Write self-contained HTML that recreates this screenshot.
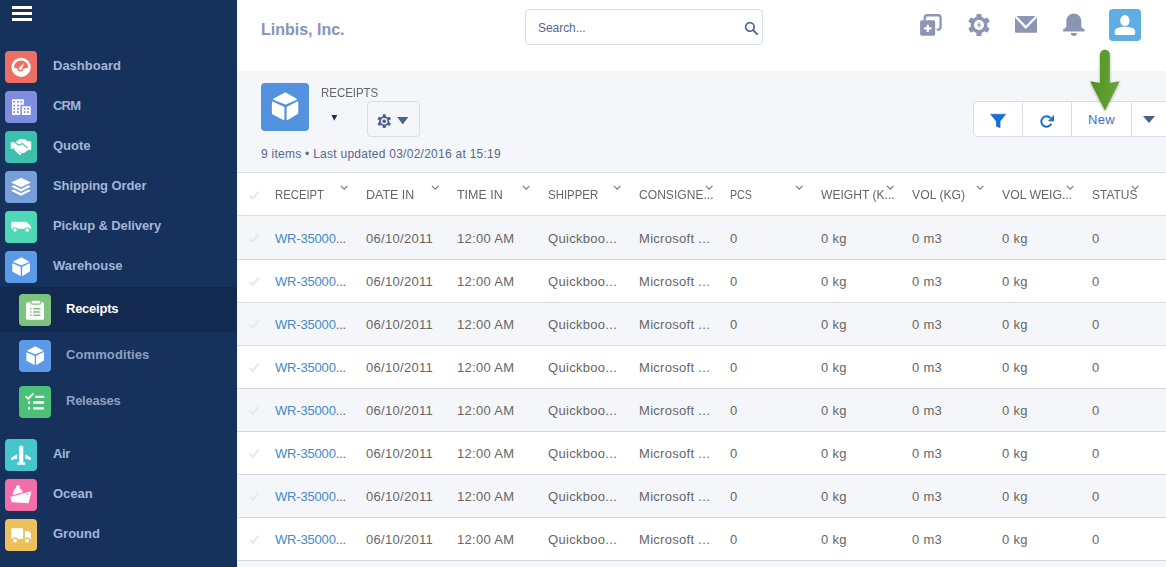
<!DOCTYPE html>
<html lang="en">
<head>
<meta charset="utf-8">
<title>Linbis, Inc. - Receipts</title>
<style>
*{box-sizing:border-box;margin:0;padding:0}
html,body{width:1166px;height:567px;overflow:hidden;background:#fff}
body{font-family:"Liberation Sans","DejaVu Sans",sans-serif;font-size:13px;color:#666;position:relative}
.abs{position:absolute}
/* sidebar */
#side{position:absolute;left:0;top:0;width:237px;height:567px;background:#16325c}
.burger{position:absolute;left:12px;top:6px;width:19.600px;height:15px}
.burger i{display:block;height:3px;background:#fff;margin-bottom:3px}
.nav{position:absolute;left:0;width:237px;height:40px}
.nav .ic{position:absolute;left:5px;top:0;width:32px;height:32px;border-radius:4px}
.nav .lb{position:absolute;left:53px;top:-1px;line-height:32px;font-size:13px;font-weight:bold;color:#a3b5d8;letter-spacing:0;white-space:nowrap}
.sub{position:absolute;left:0;width:237px;height:45px}
.sub .ic{position:absolute;left:19px;top:7px;width:32px;height:32px;border-radius:4px}
.sub .lb{position:absolute;left:66px;top:6px;line-height:32px;font-size:13px;font-weight:bold;color:#a3b5d8;letter-spacing:.1px;white-space:nowrap}
.sub .lb{color:#8f9fbe}
.sub.act{background:#122a50}
.sub.act .lb{color:#fff}
.ic svg{position:absolute;left:0;top:0;width:32px;height:32px}
/* top bar */
#brand{position:absolute;left:261px;top:20px;font-size:16px;font-weight:bold;color:#8694b3;line-height:20px;white-space:nowrap}
#search{position:absolute;left:525px;top:9px;width:238px;height:36px;border:1px solid #d8dde6;border-radius:4px;background:#fff}
#search span{position:absolute;left:12px;top:1px;line-height:34px;font-size:12px;color:#54698d;letter-spacing:-.05px}
#search svg{position:absolute;left:217.500px;top:10.500px;width:14.500px;height:14.500px}
.ti{position:absolute}
#avatar{position:absolute;left:1109px;top:9px;width:32px;height:32px;border-radius:4px;background:#5fade3}
/* page header */
#ph{position:absolute;left:237px;top:71px;width:929px;height:102px;background:#f4f6f9}
#phicon{position:absolute;left:261px;top:83px;width:48px;height:48px;border-radius:4px;background:#5392de}
#title{position:absolute;left:321px;top:85px;line-height:16px;font-size:13px;color:#666;white-space:nowrap;transform-origin:0 50%;transform:scaleX(.88)}
#gearbtn{position:absolute;left:367px;top:101px;width:53px;height:36px;border:1px solid #d8dde6;border-radius:4px;background:#f4f6f9}
#info{position:absolute;left:261px;top:146px;line-height:16px;font-size:12px;color:#54698d;letter-spacing:.26px;white-space:nowrap}
#bg{position:absolute;left:973px;top:101px;width:200px;height:36px;border:1px solid #d8dde6;border-radius:4px;background:#fff}
#bg .dv{position:absolute;top:0;width:1px;height:34px;background:#d8dde6}
#new{position:absolute;left:1088px;top:112px;line-height:16px;font-size:13px;color:#3d6fc6;letter-spacing:.3px}
/* table */
#thead{position:absolute;left:237px;top:172px;width:929px;height:44px;background:#fff;border-top:1px solid #d8dde6;border-bottom:1px solid #d8dde6}
.row{position:absolute;left:237px;width:929px;height:43px;border-bottom:1px solid #d6d9df;background:#fff}
.row.alt{background:#f4f6f9}
.c{position:absolute;top:0;line-height:43px;font-size:13px;color:#666;white-space:nowrap;letter-spacing:.3px}
.lk{color:#4489c8}
.c0{letter-spacing:-.18px}
.row.r0{height:44px}
.row.r0 .c{top:1px}
.h{position:absolute;top:0;line-height:43px;font-size:13px;color:#666;white-space:nowrap;transform-origin:0 50%}
.chev{position:absolute;top:12.300px;width:8.400px;height:5.600px}
.ck{position:absolute;left:11px;width:12px;height:9.800px}

</style>
</head>
<body>
<div id="side">
<div class="burger"><i></i><i></i><i></i></div>
<div class="nav" style="top:51px"><div class="ic" style="background:#ef6e64"><svg viewBox="0 0 32 32"><circle cx="16.100" cy="16.300" r="9.600" fill="#fff"/><path d="M9 16.500A7.100 7.100 0 0 1 23.200 16.500Q19.500 17.700 16.100 17.700Q12.500 17.700 9 16.500z" fill="#ef6e64"/><circle cx="15.500" cy="17.400" r="3" fill="#ef6e64"/><circle cx="15.500" cy="17.400" r="1.600" fill="#fff"/><path d="M14.300 16.600L19 12.300 16.800 18.300z" fill="#fff"/></svg></div><div class="lb">Dashboard</div></div>
<div class="nav" style="top:91px"><div class="ic" style="background:#7f8de1"><svg viewBox="0 0 32 32"><path d="M7 8.300h11.900v5.500h-3.500v10.200H7z" fill="#fff"/><rect x="16.900" y="15.300" width="8.800" height="8.700" fill="#fff"/><g fill="#7f8de1"><rect x="8.3" y="9.9" width="1.800" height="1.800"/><rect x="12.1" y="9.9" width="1.800" height="1.800"/><rect x="15.5" y="9.9" width="1.800" height="1.800"/><rect x="8.3" y="13.6" width="1.800" height="1.800"/><rect x="12.1" y="13.6" width="1.800" height="1.800"/><rect x="8.3" y="16.9" width="1.800" height="1.800"/><rect x="12.1" y="16.9" width="1.800" height="1.800"/><rect x="8.3" y="20.1" width="1.800" height="1.800"/><rect x="12.1" y="20.1" width="1.800" height="1.800"/><rect x="18.8" y="16.9" width="1.800" height="1.800"/><rect x="22.0" y="16.9" width="1.800" height="1.800"/><rect x="18.8" y="20.1" width="1.800" height="1.800"/><rect x="22.0" y="20.1" width="1.800" height="1.800"/></g></svg></div><div class="lb" style="letter-spacing:-.8px">CRM</div></div>
<div class="nav" style="top:131px"><div class="ic" style="background:#3dbfad"><svg viewBox="0 0 32 32"><path d="M6 11.300L10.300 11.500 12.200 10.300 14.500 8.500H20L22.300 10.300 25.900 10.800V18.800H22.700L21 20.600 18.100 21.900 16 21.500 10 16.900 6 17.700z" fill="#fff" stroke="#fff" stroke-width=".6" stroke-linejoin="round"/><path d="M10.300 18.500L15.100 23" stroke="#fff" stroke-width="2.300" stroke-linecap="round"/><path d="M10 11.200L13.600 14.100 16.600 13.200M16.300 11.600L22.400 16.900" stroke="#3dbfad" stroke-width="1.200" fill="none"/></svg></div><div class="lb">Quote</div></div>
<div class="nav" style="top:171px"><div class="ic" style="background:#769ed9"><svg viewBox="0 0 32 32"><path d="M16 6.700l9.900 4.800-9.900 4.800-9.900-4.800z" fill="#fff"/><path d="M6.100 15.500l2.400-1.200 7.500 3.700 7.500-3.700 2.400 1.200-9.900 4.900z" fill="#fff"/><path d="M6.100 19.800l2.400-1.200 7.500 3.700 7.500-3.700 2.400 1.200-9.900 4.900z" fill="#fff"/></svg></div><div class="lb" style="letter-spacing:-.08px">Shipping Order</div></div>
<div class="nav" style="top:211px"><div class="ic" style="background:#4ed8b6"><svg viewBox="0 0 32 32"><path d="M6.200 12.300c0-.9.600-1.500 1.500-1.500h13l3.200 2.200 2 2.200v2.600H6.200z" fill="#fff"/><circle cx="10" cy="19" r="2.300" fill="#fff" stroke="#4ed8b6" stroke-width="1.100"/><circle cx="22.200" cy="19" r="2.300" fill="#fff" stroke="#4ed8b6" stroke-width="1.100"/></svg></div><div class="lb" style="letter-spacing:-.1px">Pickup &amp; Delivery</div></div>
<div class="nav" style="top:251px"><div class="ic" style="background:#5a9ae6"><svg viewBox="0 0 32 32"><g transform="translate(.1 0) scale(.6667)" fill="#fff" stroke="#fff" stroke-width="1.600" stroke-linejoin="round"><path d="M24.300 10.300L35 16.200 24.500 20.800 13.200 16.200z"/><path d="M11.700 19.400L22.600 24.400V36.300L11.700 30.600z"/><path d="M26.400 24.400L36.500 19.200V30L26.400 36.400z"/></g></svg></div><div class="lb">Warehouse</div></div>
<div class="nav" style="top:439px"><div class="ic" style="background:#46c5cd"><svg viewBox="0 0 32 32"><path d="M14.100 8.600a2.100 2.100 0 0 1 4.200 0v15h2v2.100h-8.200v-2.100h2z" fill="#fff"/><path d="M12.200 15.200l-6 3.600v2.400l6-1.600z M20.300 15.200l5.700 3.600v2.400l-5.700-1.600z" fill="#fff"/></svg></div><div class="lb" style="letter-spacing:-.4px">Air</div></div>
<div class="nav" style="top:479px"><div class="ic" style="background:#f16eab"><svg viewBox="0 0 32 32"><path d="M8 15.500L9.800 10.200 11.400 9.400 11.800 6.800H14.200L14.600 9.400 17 11.700 17.500 13z" fill="#fff" stroke="#fff" stroke-width=".8" stroke-linejoin="round"/><path d="M5.800 18.200L25.900 12.800 23.300 23.800 7 22.800z" fill="#fff" stroke="#fff" stroke-width=".8" stroke-linejoin="round"/><circle cx="22.500" cy="15.200" r=".8" fill="#f16eab"/></svg></div><div class="lb">Ocean</div></div>
<div class="nav" style="top:519px"><div class="ic" style="background:#ebc15c"><svg viewBox="0 0 32 32"><path d="M6.200 9.300h11.900v10.700H6.200z M19.900 12h4l2.100 2.500v5.500h-6.100z" fill="#fff"/><circle cx="10" cy="21.600" r="2.600" fill="#fff" stroke="#ebc15c" stroke-width="1.300"/><circle cx="22.100" cy="21.600" r="2.600" fill="#fff" stroke="#ebc15c" stroke-width="1.300"/></svg></div><div class="lb">Ground</div></div>
<div class="sub act" style="top:287px"><div class="ic" style="background:#7dc37d"><svg viewBox="0 0 32 32"><rect x="7" y="8.200" width="18" height="17.600" rx="1.600" fill="#fff"/><rect x="12" y="6.200" width="10" height="4" rx="1.600" fill="#fff" stroke="#7dc37d" stroke-width="1.200"/><g stroke="#7dc37d" stroke-width="1.400"><path d="M11 14.800h1.500M14.100 14.800h7.300M11 18h1.500M14.100 18h7.300M11 21.200h1.500M14.100 21.200h7.300"/></g></svg></div><div class="lb" style="letter-spacing:-.25px">Receipts</div></div>
<div class="sub" style="top:333px"><div class="ic" style="background:#5a9ae6"><svg viewBox="0 0 32 32"><g transform="translate(.1 0) scale(.6667)" fill="#fff" stroke="#fff" stroke-width="1.600" stroke-linejoin="round"><path d="M24.300 10.300L35 16.200 24.500 20.800 13.200 16.200z"/><path d="M11.700 19.400L22.600 24.400V36.300L11.700 30.600z"/><path d="M26.400 24.400L36.500 19.200V30L26.400 36.400z"/></g></svg></div><div class="lb">Commodities</div></div>
<div class="sub" style="top:379px"><div class="ic" style="background:#4bc076"><svg viewBox="0 0 32 32"><path d="M6.600 10.200l2.700 2.500 5.200-5.300" stroke="#fff" stroke-width="1.900" fill="none"/><path d="M16.100 10.900h9M9 16.500h2.100M14.100 16.500h11M9 22.300h2.100M14.100 22.300h11" stroke="#fff" stroke-width="2.300"/></svg></div><div class="lb" style="letter-spacing:-.25px">Releases</div></div>
</div>
<div id="brand">Linbis, Inc.</div>
<div id="search"><span>Search...</span><svg viewBox="0 0 16 16"><circle cx="6.500" cy="6.500" r="4.700" fill="none" stroke="#54698d" stroke-width="1.900"/><path d="M10 10l4.500 4.500" stroke="#54698d" stroke-width="2.200" stroke-linecap="round"/></svg></div>
<svg class="ti" style="left:919px;top:13px" width="24" height="24" viewBox="0 0 24 24"><path d="M5.750 7.500V4.750a2.500 2.500 0 0 1 2.500-2.500h10.800a2.500 2.500 0 0 1 2.500 2.500v9.300a2.500 2.500 0 0 1-2.500 2.500h-1.300" fill="none" stroke="#8b96b4" stroke-width="2.300"/><rect x="1.100" y="7.300" width="15.100" height="15.400" rx="1.600" fill="#8b96b4"/><path d="M8.800 11.700v7.400M5.100 15.400h7.400" stroke="#fff" stroke-width="2.200"/></svg>
<svg class="ti" style="left:966.800px;top:12.900px" width="24" height="24" viewBox="0 0 24 24"><g fill="#8b96b4"><circle cx="12" cy="12" r="8.400"/><rect x="9.400" y="0.900" width="5.200" height="22.200" rx="1.200"/><rect x="9.400" y="0.900" width="5.200" height="22.200" rx="1.200" transform="rotate(60 12 12)"/><rect x="9.400" y="0.900" width="5.200" height="22.200" rx="1.200" transform="rotate(120 12 12)"/></g><circle cx="12" cy="12" r="5" fill="#fff"/><path d="M13 8.300l-3.200 4.300h2l-.8 3.100 3.200-4.300h-2z" fill="#8b96b4"/></svg>
<svg class="ti" style="left:1014px;top:15px" width="24" height="19" viewBox="0 0 24 19"><rect x="1" y="1" width="22" height="16.800" rx="1" fill="#8b96b4"/><path d="M1.300 1.300l10.500 11 10.900-11" fill="none" stroke="#fff" stroke-width="2.200"/></svg>
<svg class="ti" style="left:1062px;top:13px" width="24" height="24" viewBox="0 0 24 24"><path d="M11.800.600c-4.200 0-7.500 3.300-7.500 7.500v5c0 1.300-.8 2.300-3.300 3.400v1.900h21.600v-1.900c-2.500-1.100-3.300-2.100-3.300-3.400v-5c0-4.200-3.300-7.500-7.500-7.500z" fill="#8b96b4"/><path d="M8.800 20a3 3 0 0 0 6 0z" fill="#8b96b4"/></svg>
<div id="avatar"><svg width="32" height="32" viewBox="0 0 32 32"><ellipse cx="15.900" cy="11.600" rx="4.700" ry="5.500" fill="#fff"/><path d="M5.700 22.500c0-2.500 1.800-3.700 4.500-4l3.300-.7h4.800l3.300.7c2.700.3 4.500 1.500 4.500 4v1.800c0 1-.7 1.600-1.600 1.600H7.300c-.9 0-1.600-.6-1.600-1.600z" fill="#fff"/></svg></div>
<div id="ph"></div>
<div id="phicon"><svg width="48" height="48" viewBox="0 0 48 48"><g fill="#fff" stroke="#fff" stroke-width="1.600" stroke-linejoin="round"><path d="M24.300 10.300L35 16.200 24.500 20.800 13.200 16.200z"/><path d="M11.700 19.400L22.600 24.400V36.300L11.700 30.600z"/><path d="M26.400 24.400L36.500 19.200V30L26.400 36.400z"/></g></svg></div>
<div id="title">RECEIPTS</div>
<svg class="ti" style="left:330.800px;top:114.800px" width="6.600" height="5.800" viewBox="0 0 8 7"><path d="M0.500 0h7L4 7z" fill="#16325c"/></svg>
<div id="gearbtn"><svg class="ti" style="left:8.700px;top:11.600px" width="14.500" height="14.500" viewBox="0 0 24 24"><g fill="#4c6088"><circle cx="12" cy="12" r="8.300"/><rect x="9.500" y="0.500" width="5" height="23" rx="1"/><rect x="9.500" y="0.500" width="5" height="23" rx="1" transform="rotate(60 12 12)"/><rect x="9.500" y="0.500" width="5" height="23" rx="1" transform="rotate(120 12 12)"/></g><circle cx="12" cy="12" r="5.400" fill="#e9effa"/><circle cx="12" cy="12" r="3" fill="#4c6088"/></svg><svg class="ti" style="left:29px;top:15px" width="11.500" height="7.400" viewBox="0 0 12 8"><path d="M0 0h12L6 8z" fill="#4c6088"/></svg></div>
<div id="info">9 items • Last updated 03/02/2016 at 15:19</div>
<div id="bg"><div class="dv" style="left:48px"></div><div class="dv" style="left:97px"></div><div class="dv" style="left:157px"></div>
<svg class="ti" style="left:16px;top:11px" width="17" height="16" viewBox="0 0 17 16"><path d="M.600 1.200H15.700L10.100 8.300V14.700L6.300 13.200V8.300z" fill="#1670d0" stroke="#1670d0" stroke-width=".6" stroke-linejoin="round"/></svg>
<svg class="ti" style="left:66px;top:12px" width="15" height="15" viewBox="0 0 15 15"><path d="M10.500 4.200A5.200 5.200 0 1 0 11.200 9.800" fill="none" stroke="#1670d0" stroke-width="2"/><path d="M14 .800V7.300H7.800z" fill="#1670d0"/></svg>
<svg class="ti" style="left:169px;top:13.500px" width="12" height="7" viewBox="0 0 12 7"><path d="M0 0h12L6 7z" fill="#4c6088"/></svg>
</div>
<div id="new">New</div>
<svg class="ti" style="left:1085px;top:48px;filter:drop-shadow(0 1px 1.500px rgba(0,0,0,.35))" width="40" height="68" viewBox="0 0 40 68"><defs><linearGradient id="ag" x1="0" y1="0" x2="1" y2="0"><stop offset="0" stop-color="#508f22"/><stop offset="1" stop-color="#69a836"/></linearGradient></defs><path d="M15 6.600a4.900 4.900 0 0 1 9.800 0V35L34.500 33.200 20 62.500 5.200 33.200 15 35z" fill="url(#ag)"/></svg>

<div id="thead"><svg class="ck" style="top:16.5px" viewBox="0 0 11 9"><path d="M1.300 5.300l3 2.800 5.600-6.600" stroke="#e7e9ec" stroke-width="2.100" fill="none"/></svg><div class="h" style="left:38px;transform:scaleX(0.87)">RECEIPT</div><svg class="chev" style="left:103.19999999999999px" viewBox="0 0 9 6"><path d="M1 1l3.500 3.500 3.500-3.500" stroke="#777" stroke-width="1.200" fill="none"/></svg><div class="h" style="left:129px;transform:scaleX(0.96)">DATE IN</div><svg class="chev" style="left:194.2px" viewBox="0 0 9 6"><path d="M1 1l3.500 3.500 3.500-3.500" stroke="#777" stroke-width="1.200" fill="none"/></svg><div class="h" style="left:220px;transform:scaleX(0.96)">TIME IN</div><svg class="chev" style="left:285.1px" viewBox="0 0 9 6"><path d="M1 1l3.500 3.500 3.500-3.500" stroke="#777" stroke-width="1.200" fill="none"/></svg><div class="h" style="left:311px;transform:scaleX(0.88)">SHIPPER</div><svg class="chev" style="left:376.20000000000005px" viewBox="0 0 9 6"><path d="M1 1l3.500 3.500 3.500-3.500" stroke="#777" stroke-width="1.200" fill="none"/></svg><div class="h" style="left:402px;transform:scaleX(0.93)">CONSIGNE...</div><svg class="chev" style="left:467.5px" viewBox="0 0 9 6"><path d="M1 1l3.500 3.500 3.500-3.500" stroke="#777" stroke-width="1.200" fill="none"/></svg><div class="h" style="left:493px;transform:scaleX(0.82)">PCS</div><svg class="chev" style="left:558px" viewBox="0 0 9 6"><path d="M1 1l3.500 3.500 3.500-3.500" stroke="#777" stroke-width="1.200" fill="none"/></svg><div class="h" style="left:584px;transform:scaleX(0.93)">WEIGHT (K...</div><svg class="chev" style="left:648.9px" viewBox="0 0 9 6"><path d="M1 1l3.500 3.500 3.500-3.500" stroke="#777" stroke-width="1.200" fill="none"/></svg><div class="h" style="left:675px;transform:scaleX(0.94)">VOL (KG)</div><svg class="chev" style="left:739.2px" viewBox="0 0 9 6"><path d="M1 1l3.500 3.500 3.500-3.500" stroke="#777" stroke-width="1.200" fill="none"/></svg><div class="h" style="left:765px;transform:scaleX(0.94)">VOL WEIG...</div><svg class="chev" style="left:829.4000000000001px" viewBox="0 0 9 6"><path d="M1 1l3.500 3.500 3.500-3.500" stroke="#777" stroke-width="1.200" fill="none"/></svg><div class="h" style="left:855px;transform:scaleX(0.92)">STATUS</div><svg class="chev" style="left:894.3px" viewBox="0 0 9 6"><path d="M1 1l3.500 3.500 3.500-3.500" stroke="#777" stroke-width="1.200" fill="none"/></svg></div>
<div class="row alt r0" style="top:216px"><svg class="ck" style="top:16.5px" viewBox="0 0 11 9"><path d="M1.300 5.300l3 2.800 5.600-6.600" stroke="#e7e9ec" stroke-width="2.100" fill="none"/></svg><div class="c c0" style="left:38px"><span class="lk">WR-35000</span>...</div><div class="c" style="left:129px">06/10/2011</div><div class="c" style="left:220px">12:00 AM</div><div class="c" style="left:311px">Quickboo...</div><div class="c" style="left:402px">Microsoft ...</div><div class="c" style="left:493px">0</div><div class="c" style="left:584px">0 kg</div><div class="c" style="left:675px">0 m3</div><div class="c" style="left:765px">0 kg</div><div class="c" style="left:855px">0</div></div>
<div class="row" style="top:260px"><svg class="ck" style="top:16px" viewBox="0 0 11 9"><path d="M1.300 5.300l3 2.800 5.600-6.600" stroke="#e7e9ec" stroke-width="2.100" fill="none"/></svg><div class="c c0" style="left:38px"><span class="lk">WR-35000</span>...</div><div class="c" style="left:129px">06/10/2011</div><div class="c" style="left:220px">12:00 AM</div><div class="c" style="left:311px">Quickboo...</div><div class="c" style="left:402px">Microsoft ...</div><div class="c" style="left:493px">0</div><div class="c" style="left:584px">0 kg</div><div class="c" style="left:675px">0 m3</div><div class="c" style="left:765px">0 kg</div><div class="c" style="left:855px">0</div></div>
<div class="row alt" style="top:303px"><svg class="ck" style="top:16px" viewBox="0 0 11 9"><path d="M1.300 5.300l3 2.800 5.600-6.600" stroke="#e7e9ec" stroke-width="2.100" fill="none"/></svg><div class="c c0" style="left:38px"><span class="lk">WR-35000</span>...</div><div class="c" style="left:129px">06/10/2011</div><div class="c" style="left:220px">12:00 AM</div><div class="c" style="left:311px">Quickboo...</div><div class="c" style="left:402px">Microsoft ...</div><div class="c" style="left:493px">0</div><div class="c" style="left:584px">0 kg</div><div class="c" style="left:675px">0 m3</div><div class="c" style="left:765px">0 kg</div><div class="c" style="left:855px">0</div></div>
<div class="row" style="top:346px"><svg class="ck" style="top:16px" viewBox="0 0 11 9"><path d="M1.300 5.300l3 2.800 5.600-6.600" stroke="#e7e9ec" stroke-width="2.100" fill="none"/></svg><div class="c c0" style="left:38px"><span class="lk">WR-35000</span>...</div><div class="c" style="left:129px">06/10/2011</div><div class="c" style="left:220px">12:00 AM</div><div class="c" style="left:311px">Quickboo...</div><div class="c" style="left:402px">Microsoft ...</div><div class="c" style="left:493px">0</div><div class="c" style="left:584px">0 kg</div><div class="c" style="left:675px">0 m3</div><div class="c" style="left:765px">0 kg</div><div class="c" style="left:855px">0</div></div>
<div class="row alt" style="top:389px"><svg class="ck" style="top:16px" viewBox="0 0 11 9"><path d="M1.300 5.300l3 2.800 5.600-6.600" stroke="#e7e9ec" stroke-width="2.100" fill="none"/></svg><div class="c c0" style="left:38px"><span class="lk">WR-35000</span>...</div><div class="c" style="left:129px">06/10/2011</div><div class="c" style="left:220px">12:00 AM</div><div class="c" style="left:311px">Quickboo...</div><div class="c" style="left:402px">Microsoft ...</div><div class="c" style="left:493px">0</div><div class="c" style="left:584px">0 kg</div><div class="c" style="left:675px">0 m3</div><div class="c" style="left:765px">0 kg</div><div class="c" style="left:855px">0</div></div>
<div class="row" style="top:432px"><svg class="ck" style="top:16px" viewBox="0 0 11 9"><path d="M1.300 5.300l3 2.800 5.600-6.600" stroke="#e7e9ec" stroke-width="2.100" fill="none"/></svg><div class="c c0" style="left:38px"><span class="lk">WR-35000</span>...</div><div class="c" style="left:129px">06/10/2011</div><div class="c" style="left:220px">12:00 AM</div><div class="c" style="left:311px">Quickboo...</div><div class="c" style="left:402px">Microsoft ...</div><div class="c" style="left:493px">0</div><div class="c" style="left:584px">0 kg</div><div class="c" style="left:675px">0 m3</div><div class="c" style="left:765px">0 kg</div><div class="c" style="left:855px">0</div></div>
<div class="row alt" style="top:475px"><svg class="ck" style="top:16px" viewBox="0 0 11 9"><path d="M1.300 5.300l3 2.800 5.600-6.600" stroke="#e7e9ec" stroke-width="2.100" fill="none"/></svg><div class="c c0" style="left:38px"><span class="lk">WR-35000</span>...</div><div class="c" style="left:129px">06/10/2011</div><div class="c" style="left:220px">12:00 AM</div><div class="c" style="left:311px">Quickboo...</div><div class="c" style="left:402px">Microsoft ...</div><div class="c" style="left:493px">0</div><div class="c" style="left:584px">0 kg</div><div class="c" style="left:675px">0 m3</div><div class="c" style="left:765px">0 kg</div><div class="c" style="left:855px">0</div></div>
<div class="row" style="top:518px"><svg class="ck" style="top:16px" viewBox="0 0 11 9"><path d="M1.300 5.300l3 2.800 5.600-6.600" stroke="#e7e9ec" stroke-width="2.100" fill="none"/></svg><div class="c c0" style="left:38px"><span class="lk">WR-35000</span>...</div><div class="c" style="left:129px">06/10/2011</div><div class="c" style="left:220px">12:00 AM</div><div class="c" style="left:311px">Quickboo...</div><div class="c" style="left:402px">Microsoft ...</div><div class="c" style="left:493px">0</div><div class="c" style="left:584px">0 kg</div><div class="c" style="left:675px">0 m3</div><div class="c" style="left:765px">0 kg</div><div class="c" style="left:855px">0</div></div>
<div class="row alt" style="top:561px"><svg class="ck" style="top:16px" viewBox="0 0 11 9"><path d="M1.300 5.300l3 2.800 5.600-6.600" stroke="#e7e9ec" stroke-width="2.100" fill="none"/></svg><div class="c c0" style="left:38px"><span class="lk">WR-35000</span>...</div><div class="c" style="left:129px">06/10/2011</div><div class="c" style="left:220px">12:00 AM</div><div class="c" style="left:311px">Quickboo...</div><div class="c" style="left:402px">Microsoft ...</div><div class="c" style="left:493px">0</div><div class="c" style="left:584px">0 kg</div><div class="c" style="left:675px">0 m3</div><div class="c" style="left:765px">0 kg</div><div class="c" style="left:855px">0</div></div>
</body>
</html>
